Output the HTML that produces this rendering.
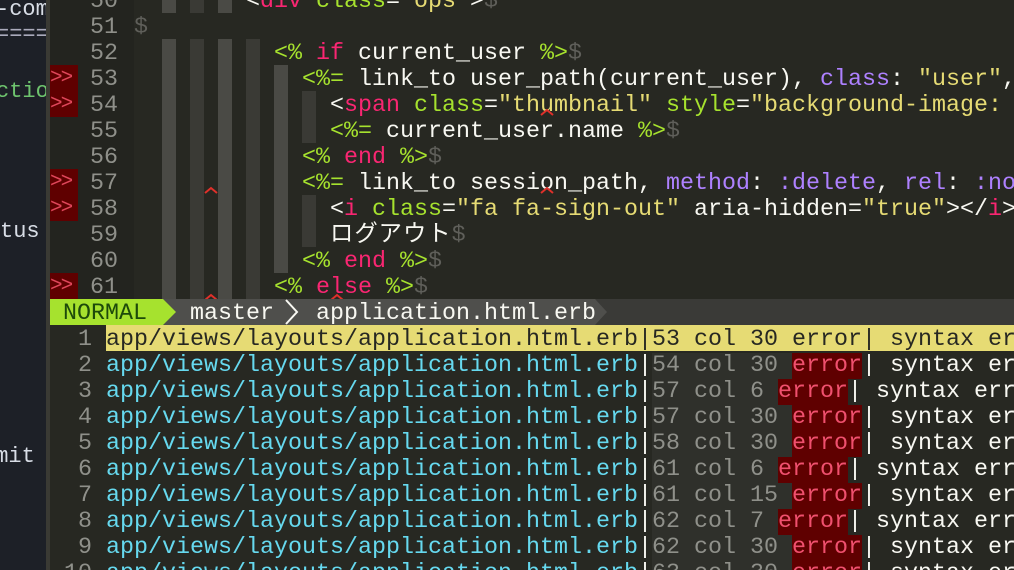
<!DOCTYPE html>
<html style="overflow:hidden;height:570px"><head><meta charset="utf-8"><style>
*{margin:0;padding:0}
body{width:1014px;height:570px;overflow:hidden;background:#272822;position:relative;font-family:"Liberation Mono","Noto Sans CJK JP",monospace;font-size:23.33px;}
.a{position:absolute;white-space:pre;line-height:26px;height:26px;transform:translateY(2px)}
#left{position:absolute;left:0;top:0;width:46px;height:570px;background:#1d2027;overflow:hidden}
#left .a{font-size:22px;color:#d8dde6}
.g{position:absolute}
.n{color:#8f908a;text-align:right;width:70px;left:48px}
.gr{color:#a6e22e}.pk{color:#f92672}.w{color:#f8f8f2}.pu{color:#ae81ff}.y{color:#e6db74}.d{color:#5f5f5a}
.sg{position:absolute;left:50px;width:28px;height:26px;background:#5f0000;color:#e0465a;font-size:21px;line-height:28px;letter-spacing:-2px;overflow:hidden}
.qn{color:#8f908a;text-align:right;width:50px;left:42px}
.cy{color:#66d9ef}.er{background:#5f0000;color:#f0506e}.gy{color:#8f908a;background:#2f302b}
.car{position:absolute;width:14px;height:8px}
</style></head><body>
<div id="left">
<div class="a" style="left:-4px;top:-5px">-com</div>
<div class="a" style="left:-4px;top:20px;color:#aab">=====</div>
<div class="a" style="left:-4px;top:77px;color:#6ec46e">ctio</div>
<div class="a" style="left:0px;top:217px">tus</div>
<div class="a" style="left:-18px;top:442px">mmit</div>
</div>
<div class="g" style="left:46px;top:0;width:4px;height:570px;background:#3a3a34"></div>
<div class="g" style="left:50px;top:0;width:84px;height:299px;background:#23241f"></div>
<div class="g" style="left:162px;top:0;width:14px;height:13px;background:#4a4a45"></div>
<div class="g" style="left:190px;top:0;width:14px;height:13px;background:#3a3a35"></div>
<div class="g" style="left:218px;top:0;width:14px;height:13px;background:#4a4a45"></div>
<div class="g" style="left:162px;top:39px;width:14px;height:260px;background:#4a4a45"></div>
<div class="g" style="left:190px;top:39px;width:14px;height:260px;background:#3a3a35"></div>
<div class="g" style="left:218px;top:39px;width:14px;height:260px;background:#4a4a45"></div>
<div class="g" style="left:246px;top:39px;width:14px;height:260px;background:#3a3a35"></div>
<div class="g" style="left:274px;top:65px;width:14px;height:208px;background:#4a4a45"></div>
<div class="g" style="left:302px;top:91px;width:14px;height:52px;background:#3a3a35"></div>
<div class="g" style="left:302px;top:195px;width:14px;height:52px;background:#3a3a35"></div>
<div class="sg" style="top:65px">&gt;&gt;</div>
<div class="sg" style="top:91px">&gt;&gt;</div>
<div class="sg" style="top:169px">&gt;&gt;</div>
<div class="sg" style="top:195px">&gt;&gt;</div>
<div class="sg" style="top:273px">&gt;&gt;</div>
<div class="a n" style="top:-13px">50</div>
<div class="a n" style="top:13px">51</div>
<div class="a n" style="top:39px">52</div>
<div class="a n" style="top:65px">53</div>
<div class="a n" style="top:91px">54</div>
<div class="a n" style="top:117px">55</div>
<div class="a n" style="top:143px">56</div>
<div class="a n" style="top:169px">57</div>
<div class="a n" style="top:195px">58</div>
<div class="a n" style="top:221px">59</div>
<div class="a n" style="top:247px">60</div>
<div class="a n" style="top:273px">61</div>
<div class="a w" style="left:246px;top:-13px">&lt;<span class="pk">div</span> <span class="gr">class</span>=<span class="y">"ops"</span>&gt;<span class="d">$</span></div>
<div class="a d" style="left:134px;top:13px">$</div>
<div class="a w" style="left:274px;top:39px"><span class="gr">&lt;%</span> <span class="pk">if</span> current_user <span class="gr">%&gt;</span><span class="d">$</span></div>
<div class="a w" style="left:302px;top:65px"><span class="gr">&lt;%=</span> link_to user_path(current_user), <span class="pu">class</span>: <span class="y">"user"</span>,</div>
<div class="a w" style="left:330px;top:91px">&lt;<span class="pk">span</span> <span class="gr">class</span>=<span class="y">"thumbnail"</span> <span class="gr">style</span>=<span class="y">"background-image:</span></div>
<div class="a w" style="left:330px;top:117px"><span class="gr">&lt;%=</span> current_user.name <span class="gr">%&gt;</span><span class="d">$</span></div>
<div class="a w" style="left:302px;top:143px"><span class="gr">&lt;%</span> <span class="pk">end</span> <span class="gr">%&gt;</span><span class="d">$</span></div>
<div class="a w" style="left:302px;top:169px"><span class="gr">&lt;%=</span> link_to session_path, <span class="pu">method</span>: <span class="pu">:delete</span>, <span class="pu">rel</span>: <span class="pu">:no</span></div>
<div class="a w" style="left:330px;top:195px">&lt;<span class="pk">i</span> <span class="gr">class</span>=<span class="y">"fa fa-sign-out"</span> aria-hidden=<span class="y">"true"</span>&gt;&lt;/<span class="pk">i</span>&gt;</div>
<div class="a w" style="left:330px;top:221px"><span style="letter-spacing:1px">ログアウト</span><span class="d">$</span></div>
<div class="a w" style="left:302px;top:247px"><span class="gr">&lt;%</span> <span class="pk">end</span> <span class="gr">%&gt;</span><span class="d">$</span></div>
<div class="a w" style="left:274px;top:273px"><span class="gr">&lt;%</span> <span class="pk">else</span> <span class="gr">%&gt;</span><span class="d">$</span></div>
<svg class="car" style="left:204px;top:186px" viewBox="0 0 14 8"><path d="M1 7 L7 2 L13 7" stroke="#e0302a" stroke-width="2" fill="none"/></svg>
<svg class="car" style="left:204px;top:293px" viewBox="0 0 14 8"><path d="M1 7 L7 2 L13 7" stroke="#e0302a" stroke-width="2" fill="none"/></svg>
<svg class="car" style="left:540px;top:108px" viewBox="0 0 14 8"><path d="M1 7 L7 2 L13 7" stroke="#e0302a" stroke-width="2" fill="none"/></svg>
<svg class="car" style="left:540px;top:186px" viewBox="0 0 14 8"><path d="M1 7 L7 2 L13 7" stroke="#e0302a" stroke-width="2" fill="none"/></svg>
<svg class="car" style="left:330px;top:293px" viewBox="0 0 14 8"><path d="M1 7 L7 2 L13 7" stroke="#e0302a" stroke-width="2" fill="none"/></svg>
<div class="g" style="left:50px;top:299px;width:964px;height:26px;background:#3a3a37"></div>
<svg class="g" style="left:50px;top:299px" width="560" height="26"><polygon points="113,0 545,0 557,13 545,26 113,26" fill="#4f4f4c"/><polygon points="0,0 113,0 126,13 113,26 0,26" fill="#a6e22e"/><path d="M236 1 L247 13 L236 25" stroke="#f8f8f2" stroke-width="2" fill="none"/></svg>
<div class="a" style="left:63px;top:299px;color:#1d4a0a">NORMAL</div>
<div class="a w" style="left:190px;top:299px">master</div>
<div class="a w" style="left:316px;top:299px">application.html.erb</div>
<div class="g" style="left:106px;top:325px;width:908px;height:26px;background:#e6db74"></div>
<div class="a" style="left:106px;top:325px;color:#272822">app/views/layouts/application.html.erb|53 col 30 error| syntax er</div>
<div class="a qn" style="top:325px">1</div>
<div class="a qn" style="top:351px">2</div>
<div class="a qn" style="top:377px">3</div>
<div class="a qn" style="top:403px">4</div>
<div class="a qn" style="top:429px">5</div>
<div class="a qn" style="top:455px">6</div>
<div class="a qn" style="top:481px">7</div>
<div class="a qn" style="top:507px">8</div>
<div class="a qn" style="top:533px">9</div>
<div class="a qn" style="top:559px;height:11px;overflow:hidden">10</div>
<div class="a w" style="left:106px;top:351px"><span class="cy">app/views/layouts/application.html.erb</span>|<span class="gy">54 col 30 </span><span class="er">error</span>| syntax err</div>
<div class="a w" style="left:106px;top:377px"><span class="cy">app/views/layouts/application.html.erb</span>|<span class="gy">57 col 6 </span><span class="er">error</span>| syntax err</div>
<div class="a w" style="left:106px;top:403px"><span class="cy">app/views/layouts/application.html.erb</span>|<span class="gy">57 col 30 </span><span class="er">error</span>| syntax err</div>
<div class="a w" style="left:106px;top:429px"><span class="cy">app/views/layouts/application.html.erb</span>|<span class="gy">58 col 30 </span><span class="er">error</span>| syntax err</div>
<div class="a w" style="left:106px;top:455px"><span class="cy">app/views/layouts/application.html.erb</span>|<span class="gy">61 col 6 </span><span class="er">error</span>| syntax err</div>
<div class="a w" style="left:106px;top:481px"><span class="cy">app/views/layouts/application.html.erb</span>|<span class="gy">61 col 15 </span><span class="er">error</span>| syntax err</div>
<div class="a w" style="left:106px;top:507px"><span class="cy">app/views/layouts/application.html.erb</span>|<span class="gy">62 col 7 </span><span class="er">error</span>| syntax err</div>
<div class="a w" style="left:106px;top:533px"><span class="cy">app/views/layouts/application.html.erb</span>|<span class="gy">62 col 30 </span><span class="er">error</span>| syntax err</div>
<div class="a w" style="left:106px;top:559px;height:9px;overflow:hidden"><span class="cy">app/views/layouts/application.html.erb</span>|<span class="gy">63 col 30 </span><span class="er">error</span>| syntax err</div>
</body></html>
